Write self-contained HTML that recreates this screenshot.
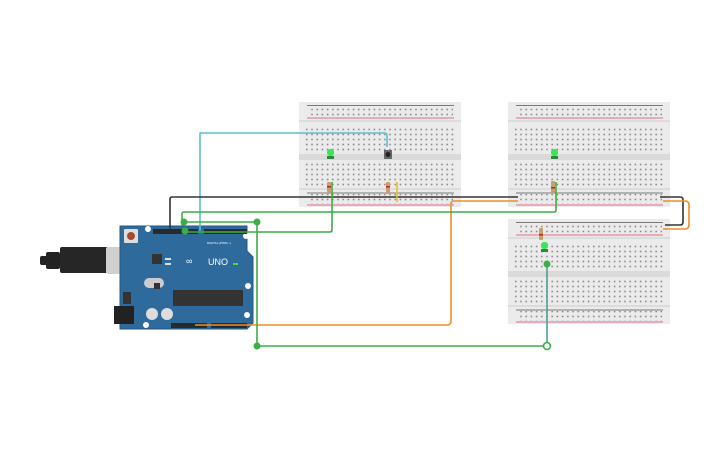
<!DOCTYPE html>
<html><head><style>html,body{margin:0;padding:0;background:#fff;width:725px;height:453px;overflow:hidden}</style></head>
<body>
<svg width="725" height="453" viewBox="0 0 725 453" xmlns="http://www.w3.org/2000/svg">
<defs>
<pattern id="h" x="0" y="0" width="5.2" height="5" patternUnits="userSpaceOnUse"><rect x="1.8" y="1.7" width="1.6" height="1.6" fill="#8a8a8a"/></pattern>
<g id="bb">
<rect x="0" y="0" width="162" height="105" fill="#ebebeb"/>
<rect x="0" y="18" width="162" height="2" fill="#dcdcdc"/>
<rect x="0" y="52" width="162" height="6" fill="#dadada"/>
<rect x="0" y="86" width="162" height="2" fill="#dcdcdc"/>
<line x1="8" y1="3.5" x2="155" y2="3.5" stroke="#555" stroke-width="0.7"/>
<line x1="8" y1="16" x2="155" y2="16" stroke="#d46" stroke-width="0.7"/>
<line x1="8" y1="91" x2="155" y2="91" stroke="#555" stroke-width="0.7"/>
<line x1="8" y1="103" x2="155" y2="103" stroke="#d46" stroke-width="0.7"/>
<rect x="9" y="5" width="145" height="10" fill="url(#h)"/>
<rect x="9" y="92" width="145" height="10" fill="url(#h)"/>
<rect x="6" y="25" width="150" height="25" fill="url(#h)"/>
<rect x="6" y="60" width="150" height="25" fill="url(#h)"/>
</g>
</defs>
<use href="#bb" x="299" y="102"/>
<use href="#bb" x="508" y="102"/>
<use href="#bb" x="508" y="219"/>

<rect x="40" y="256" width="8" height="9" rx="2" fill="#222"/>
<rect x="46" y="252" width="14" height="17" rx="2" fill="#222"/>
<rect x="60" y="247" width="48" height="26" rx="2" fill="#262626"/>
<rect x="106" y="247" width="34" height="27" rx="2" fill="#d0d0d0"/>
<path d="M120 226 H247 V251 L253 257 V323 L247 329 H120 Z" fill="#2e6b9c" stroke="#24577f" stroke-width="1"/>
<rect x="124" y="229" width="14" height="14" rx="1" fill="#ddd"/>
<circle cx="131" cy="236" r="4" fill="#a94830"/>
<circle cx="148" cy="229" r="3" fill="#fff"/><circle cx="146" cy="325" r="3" fill="#fff"/>
<circle cx="246" cy="236" r="3" fill="#fff"/><circle cx="247" cy="315" r="3" fill="#fff"/>
<circle cx="248" cy="286" r="3" fill="#fff"/>
<rect x="153" y="229" width="45" height="5" fill="#2a2a2a"/>
<rect x="204" y="229" width="43" height="5" fill="#2a2a2a"/>
<rect x="171" y="323" width="36" height="5" fill="#2a2a2a"/>
<rect x="211" y="323" width="36" height="5" fill="#2a2a2a"/>
<rect x="173" y="290" width="70" height="16" fill="#333"/>
<rect x="114" y="306" width="20" height="18" fill="#222"/>
<rect x="144" y="278" width="20" height="10" rx="5" fill="#ccc"/>
<rect x="152" y="254" width="10" height="10" fill="#333"/>
<rect x="154" y="283" width="6" height="6" fill="#333"/>
<rect x="123" y="292" width="8" height="12" fill="#333"/>
<circle cx="152" cy="314" r="6" fill="#ddd"/><circle cx="167" cy="314" r="6" fill="#ddd"/>
<text x="186" y="264" font-family="Liberation Sans,sans-serif" font-size="9" fill="#fff">∞</text>
<text x="208" y="265" font-family="Liberation Sans,sans-serif" font-size="9" fill="#fff">UNO</text>
<text x="207" y="244" font-family="Liberation Sans,sans-serif" font-size="3" fill="#fff">DIGITAL (PWM ~)</text>
<rect x="165" y="258" width="6" height="2" fill="#ddd"/><rect x="165" y="263" width="6" height="2" fill="#ddd"/>
<rect x="233" y="263" width="5" height="2" fill="#4d4"/>

<g fill="none" stroke-width="1.6" stroke-linejoin="round">
<path d="M200 231 V133 H385 Q387 133 387 136 V147" stroke="#5bbfcf"/>
<path d="M170 229 V199 Q170 197 172 197 H455 M452 197 H518 M660 197 H680 Q683 197 683 200 V222 Q683 225 680 225 H665" stroke="#333"/>
<path d="M195 325 H447 Q451 325 451 321 V204 Q451 201 454 201 H518 M663 201 H685 Q689 201 689 205 V225 Q689 229 685 229 H663" stroke="#ef8d24"/>
<path d="M182 226 V214 Q182 212 184 212 H554 Q556 212 556 210 V182" stroke="#3cae46"/>
<path d="M185 232 H330 Q332 232 332 230 V182" stroke="#3cae46"/>
<path d="M184 222 H257 V346 H547" stroke="#3cae46"/>
<path d="M547 346 V264" stroke="#50a090"/>
</g>
<circle cx="184" cy="222" r="3.5" fill="#3cae46"/>
<circle cx="185" cy="231" r="3.5" fill="#3cae46"/>
<circle cx="257" cy="222" r="3.5" fill="#3cae46"/>
<circle cx="257" cy="346" r="3.5" fill="#3cae46"/>
<circle cx="547" cy="346" r="3.5" fill="#fff" stroke="#3cae46" stroke-width="1.6"/>
<circle cx="547" cy="264" r="3.5" fill="#3cae46"/>

<rect x="327" y="149" width="7" height="7" rx="3" fill="#3fe35a"/><rect x="327" y="156" width="7" height="3" fill="#2a8a3a"/>
<rect x="551" y="149" width="7" height="7" rx="3" fill="#3fe35a"/><rect x="551" y="156" width="7" height="3" fill="#2a8a3a"/>
<rect x="541" y="242" width="7" height="7" rx="3" fill="#3fe35a"/><rect x="541" y="249" width="7" height="3" fill="#2a8a3a"/>
<rect x="384" y="150" width="8" height="9" fill="#666"/><circle cx="388" cy="154.5" r="2.5" fill="#222"/>
<rect x="327" y="182" width="4" height="12" rx="1" fill="#c9a06a"/><rect x="327" y="186" width="4" height="1.5" fill="#b22"/>
<rect x="386" y="182" width="4" height="12" rx="1" fill="#c9a06a"/><rect x="386" y="186" width="4" height="1.5" fill="#b22"/>
<rect x="551" y="181" width="4" height="12" rx="1" fill="#c9a06a"/><rect x="551" y="187" width="4" height="1.5" fill="#b22"/>
<rect x="539" y="228" width="4" height="12" rx="1" fill="#c9a06a"/><rect x="539" y="234" width="4" height="1.5" fill="#b22"/>
<line x1="397" y1="182" x2="397" y2="202" stroke="#e8c020" stroke-width="1.6"/>
</svg>
</body></html>
